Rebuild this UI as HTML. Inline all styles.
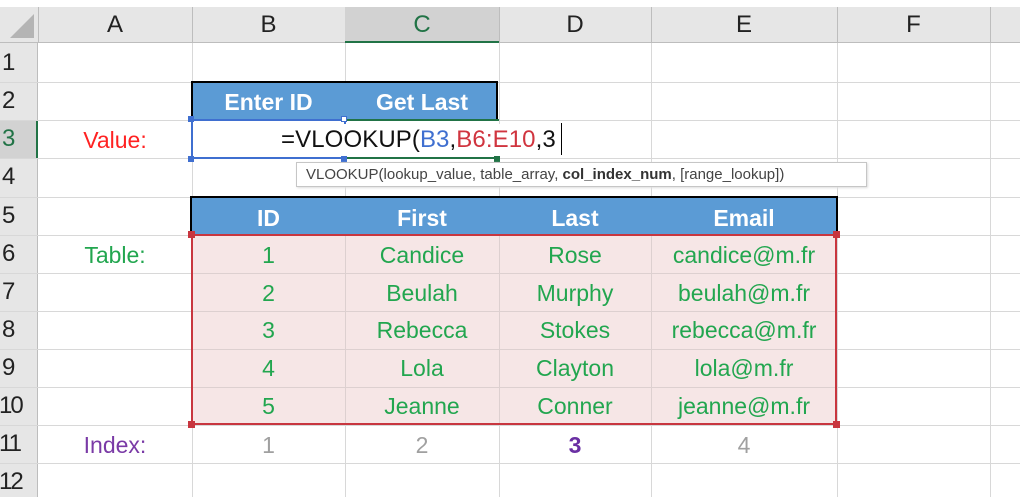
<!DOCTYPE html>
<html><head><meta charset="utf-8"><style>
*{margin:0;padding:0;box-sizing:border-box}
body{width:1020px;height:497px;overflow:hidden;background:#fff;font-family:"Liberation Sans",sans-serif;position:relative}
.a{position:absolute}
.t{position:absolute;text-align:center;font-size:23px;line-height:38px;white-space:nowrap}
.r{position:absolute;font-size:24px;line-height:38px;left:2px;color:#222}
.vl{position:absolute;width:1px;background:#d8d8d8}
.hl{position:absolute;height:1px;background:#d8d8d8}
</style></head><body>
<div class="a" style="left:0;top:7px;width:1020px;height:36px;background:#e6e6e6;border-bottom:1px solid #bdbdbd"></div>
<div class="a" style="left:0;top:43px;width:38px;height:454px;background:#e6e6e6;border-right:1px solid #bdbdbd"></div>
<svg class="a" style="left:8px;top:14px" width="26" height="24"><polygon points="26,0 26,24 2,24" fill="#b4b4b4"/></svg>
<div class="vl" style="left:38px;top:7px;height:36px;background:#bdbdbd"></div>
<div class="vl" style="left:192px;top:7px;height:36px;background:#bdbdbd"></div>
<div class="vl" style="left:345px;top:7px;height:36px;background:#bdbdbd"></div>
<div class="vl" style="left:499px;top:7px;height:36px;background:#bdbdbd"></div>
<div class="vl" style="left:651px;top:7px;height:36px;background:#bdbdbd"></div>
<div class="vl" style="left:837px;top:7px;height:36px;background:#bdbdbd"></div>
<div class="vl" style="left:990px;top:7px;height:36px;background:#bdbdbd"></div>
<div class="a" style="left:345px;top:7px;width:154px;height:36px;background:#d2d2d2;border-bottom:2px solid #217346"></div>
<div class="t" style="left:38px;top:7px;width:154px;line-height:36px;color:#222;font-size:24px">A</div>
<div class="t" style="left:192px;top:7px;width:153px;line-height:36px;color:#222;font-size:24px">B</div>
<div class="t" style="left:345px;top:7px;width:154px;line-height:36px;color:#217346;font-size:24px">C</div>
<div class="t" style="left:499px;top:7px;width:152px;line-height:36px;color:#222;font-size:24px">D</div>
<div class="t" style="left:651px;top:7px;width:186px;line-height:36px;color:#222;font-size:24px">E</div>
<div class="t" style="left:837px;top:7px;width:153px;line-height:36px;color:#222;font-size:24px">F</div>
<div class="vl" style="left:192px;top:43px;height:454px"></div>
<div class="vl" style="left:345px;top:43px;height:454px"></div>
<div class="vl" style="left:499px;top:43px;height:454px"></div>
<div class="vl" style="left:651px;top:43px;height:454px"></div>
<div class="vl" style="left:837px;top:43px;height:454px"></div>
<div class="vl" style="left:990px;top:43px;height:454px"></div>
<div class="hl" style="left:0;top:82px;width:1020px"></div>
<div class="hl" style="left:0;top:120px;width:1020px"></div>
<div class="hl" style="left:0;top:158px;width:1020px"></div>
<div class="hl" style="left:0;top:197px;width:1020px"></div>
<div class="hl" style="left:0;top:235px;width:1020px"></div>
<div class="hl" style="left:0;top:273px;width:1020px"></div>
<div class="hl" style="left:0;top:311px;width:1020px"></div>
<div class="hl" style="left:0;top:349px;width:1020px"></div>
<div class="hl" style="left:0;top:387px;width:1020px"></div>
<div class="hl" style="left:0;top:425px;width:1020px"></div>
<div class="hl" style="left:0;top:463px;width:1020px"></div>
<div class="a" style="left:0;top:121px;width:38px;height:37px;background:#d2d2d2;border-right:2px solid #217346"></div>
<div class="r" style="top:44px">1</div>
<div class="r" style="top:82px">2</div>
<div class="r" style="top:120px;color:#217346">3</div>
<div class="r" style="top:158px">4</div>
<div class="r" style="top:197px">5</div>
<div class="r" style="top:235px">6</div>
<div class="r" style="top:273px">7</div>
<div class="r" style="top:311px">8</div>
<div class="r" style="top:349px">9</div>
<div class="r" style="top:387px;left:-1px;letter-spacing:-2px">10</div>
<div class="r" style="top:425px;left:-1px;letter-spacing:-2px">11</div>
<div class="r" style="top:463px;left:-1px;letter-spacing:-2px">12</div>
<div class="a" style="left:191px;top:81px;width:307px;height:40px;background:#5b9bd5;border:2px solid #000;border-bottom:none"></div>
<div class="t" style="left:192px;top:83px;width:153px;color:#fff;font-weight:bold;line-height:38px">Enter ID</div>
<div class="t" style="left:345px;top:83px;width:154px;color:#fff;font-weight:bold;line-height:38px">Get Last</div>
<div class="a" style="left:192px;top:119px;width:307px;height:40px;background:#fff"></div>
<div class="a" style="left:345px;top:119px;width:154px;height:2px;background:#217346"></div>
<div class="a" style="left:345px;top:157px;width:154px;height:2px;background:#217346"></div>
<div class="a" style="left:191px;top:119px;width:155px;height:40px;border:2px solid #3f6fd0"></div>
<div class="a" style="left:188px;top:116px;width:6px;height:6px;background:#3f6fd0"></div>
<div class="a" style="left:341px;top:116px;width:6px;height:6px;background:#fff;border:1px solid #3f6fd0"></div>
<div class="a" style="left:188px;top:156px;width:6px;height:6px;background:#3f6fd0"></div>
<div class="a" style="left:341px;top:156px;width:6px;height:6px;background:#3f6fd0"></div>
<div class="a" style="left:494px;top:156px;width:6px;height:6px;background:#217346"></div>
<div class="t" style="left:38px;top:121px;width:154px;color:#f22">Value:</div>
<div class="t" style="left:281px;top:124px;line-height:32px;text-align:left;color:#111;font-size:24px;letter-spacing:0.1px;background:#fff">=VLOOKUP(<span style="color:#3f6fd0">B3</span>,<span style="color:#d0353f">B6:E10</span>,3</div>
<div class="a" style="left:561px;top:123px;width:1px;height:32px;background:#000"></div>
<div class="a" style="left:296px;top:162px;width:571px;height:25px;background:#fff;border:1px solid #c6c6c6;box-shadow:1px 1px 2px #ddd;font-size:15px;line-height:23px;padding-left:9px;color:#444;white-space:nowrap">VLOOKUP(lookup_value, table_array, <b style="color:#333">col_index_num</b>, [range_lookup])</div>
<div class="a" style="left:190px;top:196px;width:648px;height:40px;background:#5b9bd5;border:2px solid #000;border-bottom:none"></div>
<div class="t" style="left:192px;top:199px;width:153px;color:#fff;font-weight:bold">ID</div>
<div class="t" style="left:345px;top:199px;width:154px;color:#fff;font-weight:bold">First</div>
<div class="t" style="left:499px;top:199px;width:152px;color:#fff;font-weight:bold">Last</div>
<div class="t" style="left:651px;top:199px;width:186px;color:#fff;font-weight:bold">Email</div>
<div class="a" style="left:192px;top:236px;width:645px;height:189px;background:#f6e6e6"></div>
<div class="hl" style="left:192px;top:273px;width:645px;background:#ddd0d0"></div>
<div class="hl" style="left:192px;top:311px;width:645px;background:#ddd0d0"></div>
<div class="hl" style="left:192px;top:349px;width:645px;background:#ddd0d0"></div>
<div class="hl" style="left:192px;top:387px;width:645px;background:#ddd0d0"></div>
<div class="vl" style="left:345px;top:236px;height:189px;background:#ddd0d0"></div>
<div class="vl" style="left:499px;top:236px;height:189px;background:#ddd0d0"></div>
<div class="vl" style="left:651px;top:236px;height:189px;background:#ddd0d0"></div>
<div class="a" style="left:191px;top:234px;width:646px;height:191px;border:2px solid #c8363f"></div>
<div class="a" style="left:188px;top:231px;width:7px;height:7px;background:#c8363f"></div>
<div class="a" style="left:833px;top:231px;width:7px;height:7px;background:#c8363f"></div>
<div class="a" style="left:188px;top:421px;width:7px;height:7px;background:#c8363f"></div>
<div class="a" style="left:833px;top:421px;width:7px;height:7px;background:#c8363f"></div>
<div style="color:#22a64f">
<div class="t" style="left:38px;top:236px;width:154px">Table:</div>
<div class="t" style="left:192px;top:236px;width:153px">1</div><div class="t" style="left:345px;top:236px;width:154px">Candice</div><div class="t" style="left:499px;top:236px;width:152px">Rose</div><div class="t" style="left:651px;top:236px;width:186px">candice@m.fr</div>
<div class="t" style="left:192px;top:274px;width:153px">2</div><div class="t" style="left:345px;top:274px;width:154px">Beulah</div><div class="t" style="left:499px;top:274px;width:152px">Murphy</div><div class="t" style="left:651px;top:274px;width:186px">beulah@m.fr</div>
<div class="t" style="left:192px;top:311px;width:153px">3</div><div class="t" style="left:345px;top:311px;width:154px">Rebecca</div><div class="t" style="left:499px;top:311px;width:152px">Stokes</div><div class="t" style="left:651px;top:311px;width:186px">rebecca@m.fr</div>
<div class="t" style="left:192px;top:349px;width:153px">4</div><div class="t" style="left:345px;top:349px;width:154px">Lola</div><div class="t" style="left:499px;top:349px;width:152px">Clayton</div><div class="t" style="left:651px;top:349px;width:186px">lola@m.fr</div>
<div class="t" style="left:192px;top:387px;width:153px">5</div><div class="t" style="left:345px;top:387px;width:154px">Jeanne</div><div class="t" style="left:499px;top:387px;width:152px">Conner</div><div class="t" style="left:651px;top:387px;width:186px">jeanne@m.fr</div>
</div>
<div class="t" style="left:38px;top:426px;width:154px;color:#7a3aa6">Index:</div>
<div class="t" style="left:192px;top:426px;width:153px;color:#a0a0a0">1</div>
<div class="t" style="left:345px;top:426px;width:154px;color:#a0a0a0">2</div>
<div class="t" style="left:499px;top:426px;width:152px;color:#6a2fa3;font-weight:bold">3</div>
<div class="t" style="left:651px;top:426px;width:186px;color:#a0a0a0">4</div>
</body></html>
